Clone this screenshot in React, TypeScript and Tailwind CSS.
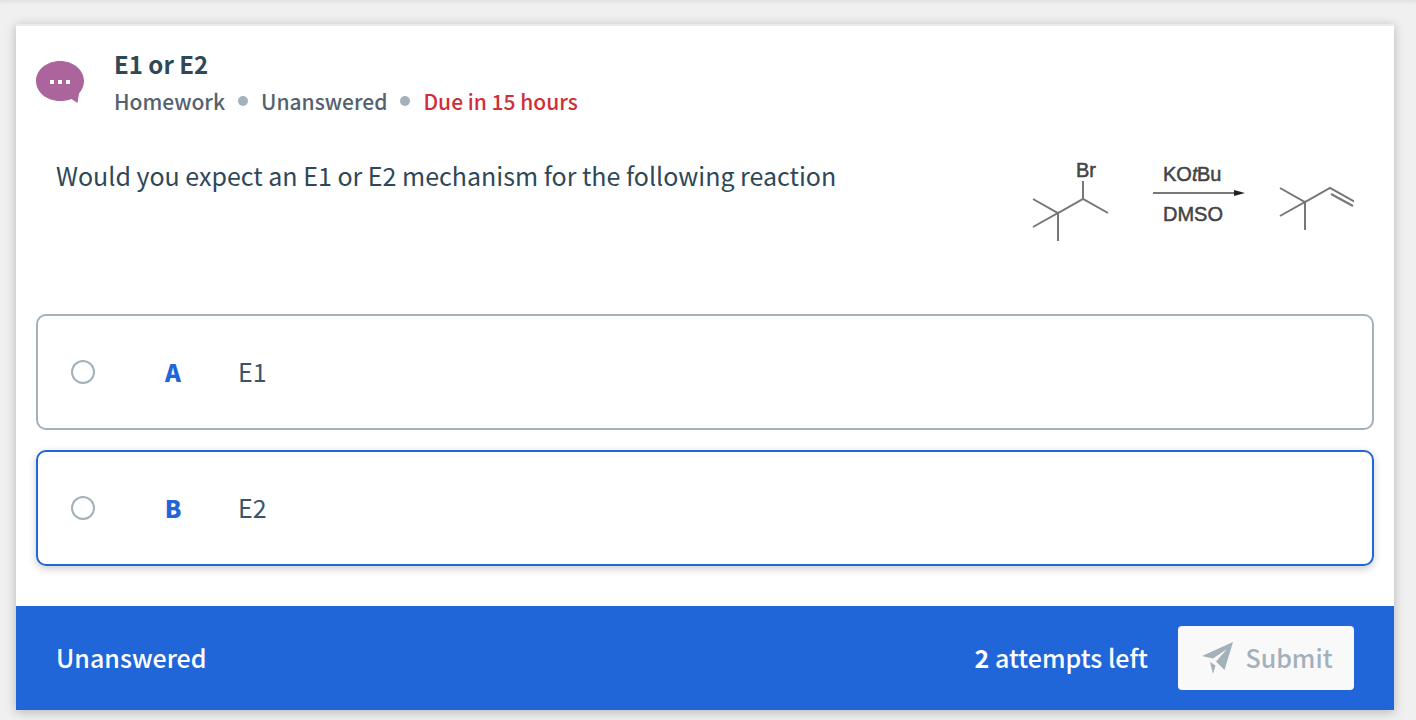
import { Fragment } from "react";

const meta = ["Homework", "Unanswered"];

const options = [
  { letter: "A", text: "E1", active: false },
  { letter: "B", text: "E2", active: true },
];

function BubbleIcon() {
  return (
    <svg viewBox="0 0 48 42" className="w-12 h-[42px] shrink-0" aria-hidden="true">
      <path
        d="M24 0C37.300 0 48 8.900 48 20C48 25 46 29 43 32.500L41.500 42L35.500 38C32 39.500 28 40 24 40C10.700 40 0 31 0 20C0 8.900 10.700 0 24 0Z"
        fill="#ab659c"
      />
      <path d="M14 19h4v4h-4zM22 19h4v4h-4zM30 19h4v4h-4z" fill="#fff" />
    </svg>
  );
}

function PlaneIcon() {
  return (
    <svg viewBox="0 0 32 32" className="w-8 h-8" fill="currentColor" aria-hidden="true">
      <path d="M31 0L0 14L11 16.500L25 7L14 19.500L22.500 28Z" />
      <path d="M8 20L13.500 23.500L11 32Z" />
    </svg>
  );
}

function Reaction() {
  return (
    <svg
      viewBox="0 0 330 90"
      className="w-[330px] h-[90px] shrink-0"
      role="img"
      aria-label="Reaction scheme with KOtBu in DMSO"
    >
      <g fill="none" stroke="#777" strokeWidth="2">
        <path d="M9 43L34 57L59 43L84 57M9 71L34 57V85M59 43V25" />
        <path d="M256 32L281 46L306 32L331 46M256 60L281 46V74M307 38L329 50" />
        <path d="M129 37H212" />
      </g>
      <path d="M210 34L221 37L210 40Z" fill="#222" />
      <g fill="#444" stroke="#444" strokeWidth="0.500" fontSize="20" fontFamily="'Liberation Sans', Arial, sans-serif">
        <text x="52" y="21">Br</text>
        <text x="139" y="25">KO</text>
        <text x="168" y="25" fontStyle="italic">t</text>
        <text x="173" y="25">Bu</text>
        <text x="139" y="65">DMSO</text>
      </g>
    </svg>
  );
}

export default function App() {
  return (
    <div className="min-h-screen bg-[#f0f0f0] pt-6 pl-4 pr-[22px] pb-[10px] shadow-[inset_0_6px_4px_-4px_rgba(0,0,0,0.07)] font-['Noto_Sans_CJK_SC',sans-serif] text-[#2f4858]">
      <main className="bg-white border-t-2 border-[#ebebeb] shadow-[0_2px_10px_rgba(0,0,0,0.25)]">
        <header className="flex items-start gap-[30px] px-5 pt-[18px]">
          <div className="pt-[17px]">
            <BubbleIcon />
          </div>
          <div>
            <h1 className="text-2xl leading-10 font-bold">E1 or E2</h1>
            <p className="flex items-center text-[21px] leading-[34px] font-medium text-[#54626f]">
              {meta.map((item) => (
                <Fragment key={item}>
                  <span>{item}</span>
                  <span className="w-[10px] h-[10px] mx-[13px] rounded-full bg-[#a3b1bb]" />
                </Fragment>
              ))}
              <span className="text-[#d12e38]">Due in 15 hours</span>
            </p>
          </div>
        </header>

        <form onSubmit={(e) => e.preventDefault()}>
          <section className="flex justify-between items-start px-10 pt-[38px] pb-[51px]">
            <p className="pt-px text-[25px] leading-9">
              Would you expect an E1 or E2 mechanism for the following reaction
            </p>
            <Reaction />
          </section>

          <div className="flex flex-col gap-5 px-5 pt-[17px] pb-10">
            {options.map((option) => (
              <label
                key={option.letter}
                className={`flex items-center h-[116px] pl-[33px] rounded-[10px] border-2 text-2xl ${
                  option.active
                    ? "border-[#2066d9] shadow-[0_3px_8px_rgba(0,0,0,0.2)]"
                    : "border-[#a3b1bb]"
                }`}
              >
                <input
                  type="radio"
                  name="answer"
                  className="appearance-none w-6 h-6 rounded-full border-2 border-[#a3b1bb] checked:border-8 checked:border-[#2066d9]"
                />
                <span className="w-9 ml-[60px] text-center font-black text-[#2066d9]">{option.letter}</span>
                <span className="ml-[47px] text-[25px] text-[#3b5568]">{option.text}</span>
              </label>
            ))}
          </div>

          <footer className="flex items-center justify-between h-[104px] px-10 bg-[#2066d9] text-white text-[25px] font-medium">
            <p>Unanswered</p>
            <div className="flex items-center gap-[30px]">
              <p>
                <strong className="font-bold">2</strong> attempts left
              </p>
              <button
                type="submit"
                disabled
                className="flex items-center justify-center gap-[11px] w-44 h-16 pl-[3px] rounded bg-[#f9f9f9] text-[#a3b1bb]"
              >
                <PlaneIcon />
                Submit
              </button>
            </div>
          </footer>
        </form>
      </main>
    </div>
  );
}
